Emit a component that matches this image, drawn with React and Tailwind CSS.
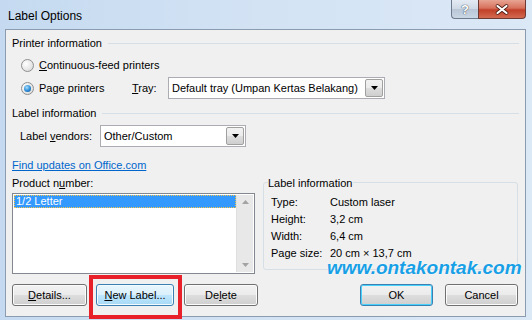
import React from "react";

const font = { fontFamily: '"Liberation Sans", Arial, sans-serif' };

const btnBase =
  "h-[22px] flex items-center justify-center rounded-[3px] border text-[11px] text-black whitespace-nowrap";
const btnNormal =
  "border-[#707070] bg-[linear-gradient(to_bottom,#f2f2f2_0%,#ebebeb_50%,#dddddd_51%,#cfcfcf_100%)] shadow-[inset_0_0_0_1px_#fcfcfc]";
const btnHover =
  "border-[#3c7fb1] bg-[linear-gradient(to_bottom,#eaf6fd_0%,#d9f0fc_50%,#bee6fd_51%,#a7d9f5_100%)] shadow-[inset_0_0_0_1px_#f4fbff]";
const btnFocus =
  "border-[#3c7fb1] bg-[linear-gradient(to_bottom,#f2f2f2_0%,#ebebeb_50%,#dddddd_51%,#cfcfcf_100%)] shadow-[inset_0_0_0_1px_#48d2fb]";

const Button = ({ children, variant = "normal", className = "" }) => {
  const v = variant === "hover" ? btnHover : variant === "focus" ? btnFocus : btnNormal;
  return <div className={`${btnBase} ${v} ${className}`}>{children}</div>;
};

const Radio = ({ checked }) => (
  <div className="w-[13px] h-[13px] shrink-0 rounded-full border border-[#8e8f8f] bg-[radial-gradient(circle_at_35%_35%,#ffffff_0%,#e6e6e6_60%,#d0d0d0_100%)] flex items-center justify-center">
    {checked && (
      <div className="w-[7px] h-[7px] rounded-full bg-[radial-gradient(circle_at_40%_35%,#a8e0ff_0%,#2a8ad4_55%,#0d4f8b_100%)]" />
    )}
  </div>
);

const DropArrow = () => (
  <div className="w-[18px] h-full shrink-0 border border-[#a0a0a0] rounded-[2px] bg-[linear-gradient(to_bottom,#f2f2f2_0%,#ebebeb_50%,#dddddd_51%,#cfcfcf_100%)] flex items-center justify-center">
    <svg width="7" height="4" viewBox="0 0 7 4">
      <path d="M0 0h7L3.5 4z" fill="#000" />
    </svg>
  </div>
);

const Select = ({ value, className }) => (
  <div className={`h-[22px] border border-[#abadb3] bg-white flex items-center pl-[3px] pr-px py-px ${className}`}>
    <span className="flex-1 text-[11px] text-black whitespace-nowrap overflow-hidden">{value}</span>
    <DropArrow />
  </div>
);

const Header = ({ children }) => (
  <div className="h-[16px] flex items-center pl-[6px]">
    <span className="text-[11px] text-black whitespace-nowrap pr-[6px]">{children}</span>
    <div className="flex-1 h-px bg-[#d5dfe5] mr-[6px]" />
  </div>
);

const InfoRow = ({ label, value }) => (
  <div className="flex h-[17px] items-center text-[11px] text-black whitespace-nowrap">
    <span className="w-[59px]">{label}</span>
    <span>{value}</span>
  </div>
);

export default function App() {
  return (
    <div
      className="relative w-[532px] h-[320px] overflow-hidden bg-[linear-gradient(to_right,#c5daf0_0%,#d3e3f4_50%,#dbe8f6_100%)] flex flex-col"
      style={font}
    >
      {/* title bar */}
      <div className="h-[29px] flex items-start justify-between shrink-0">
        <span className="mt-[7px] ml-[8px] text-[12px] text-black">Label Options</span>
        <div className="flex mr-[6px] shrink-0">
          <div className="w-[27px] h-[19px] shrink-0 border border-[#6d7b8d] border-r-0 border-t-0 rounded-bl-[4px] bg-[linear-gradient(to_bottom,#e4ebf3_0%,#cfd9e5_50%,#b8c6d6_51%,#c9d6e4_100%)] flex items-center justify-center">
            <span className="text-[13px] font-bold text-white leading-none [text-shadow:0_0_1px_#3d4a5a,0_0_1px_#3d4a5a]">?</span>
          </div>
          <div className="w-[48px] h-[19px] shrink-0 border border-[#6d3a33] border-t-0 rounded-br-[4px] bg-[linear-gradient(to_bottom,#e8a493_0%,#d7715c_45%,#c13f28_55%,#d26a50_100%)] flex items-center justify-center">
            <svg width="14" height="11" viewBox="0 0 14 11">
              <path d="M2.5 2l9 7M11.5 2l-9 7" stroke="#4a1a12" strokeWidth="3.6" strokeLinecap="round" />
              <path d="M2.5 2l9 7M11.5 2l-9 7" stroke="#fff" strokeWidth="2.2" strokeLinecap="round" />
            </svg>
          </div>
        </div>
      </div>

      {/* client area */}
      <div className="ml-[5px] mr-[6px] h-[288px] border border-[#8b9bb0] bg-[#f0f0f0] flex flex-col">
        <div className="mt-[5px]">
          <Header>Printer information</Header>
        </div>
        <div className="mt-[4px] h-[20px] flex items-center pl-[15px] gap-[5px] text-[11px] text-black whitespace-nowrap">
          <Radio />
          <span>
            <u>C</u>ontinuous-feed printers
          </span>
        </div>
        <div className="mt-[2px] h-[22px] flex items-center pl-[15px] text-[11px] text-black whitespace-nowrap">
          <Radio checked />
          <span className="ml-[5px] w-[93px]">
            Pa<u>g</u>e printers
          </span>
          <span className="w-[36px]">
            <u>T</u>ray:
          </span>
          <Select value="Default tray (Umpan Kertas Belakang)" className="w-[217px]" />
        </div>
        <div className="mt-[6px]">
          <Header>Label information</Header>
        </div>
        <div className="mt-[4px] h-[22px] flex items-center pl-[14px] text-[11px] text-black whitespace-nowrap">
          <span className="w-[80px]">
            Label <u>v</u>endors:
          </span>
          <Select value="Other/Custom" className="w-[146px]" />
        </div>
        <div className="mt-[10px] h-[16px] flex items-center pl-[6px]">
          <span className="text-[11px] text-[#0066cc] underline whitespace-nowrap">Find updates on Office.com</span>
        </div>

        <div className="mt-[2px] flex pl-[6px]">
          <div className="flex flex-col w-[243px]">
            <div className="h-[16px] flex items-center text-[11px] text-black whitespace-nowrap">
              Product n<u>u</u>mber:
            </div>
            <div className="mt-[2px] h-[81px] border border-[#828790] bg-white flex p-px">
              <div className="flex-1">
                <div className="h-[13px] bg-[#3399ff] outline-1 outline-dotted outline-[#f4c54a] -outline-offset-1 flex items-center pl-[2px] text-[11px] text-white">
                  1/2 Letter
                </div>
              </div>
              <div className="w-[17px] bg-[#e8e8e8] border-l border-[#e0e0e0] flex flex-col items-center justify-between py-[5px]">
                <svg width="7" height="4" viewBox="0 0 7 4">
                  <path d="M3.5 0L7 4H0z" fill="#a3a3a3" />
                </svg>
                <svg width="7" height="4" viewBox="0 0 7 4">
                  <path d="M0 0h7L3.5 4z" fill="#a3a3a3" />
                </svg>
              </div>
            </div>
          </div>

          <div className="ml-[8px] mt-[7px] w-[255px] h-[88px] border border-[#d5dfe5] rounded-[3px] flex flex-col pl-[7px]">
            <div className="-mt-[8px] h-[16px] flex items-center">
              <span className="bg-[#f0f0f0] pr-[1px] -ml-[3px] text-[11px] text-black whitespace-nowrap">Label information</span>
            </div>
            <div className="mt-[3px]">
              <InfoRow label="Type:" value="Custom laser" />
              <InfoRow label="Height:" value="3,2 cm" />
              <InfoRow label="Width:" value="6,4 cm" />
              <InfoRow label="Page size:" value="20 cm × 13,7 cm" />
            </div>
          </div>
        </div>

        <div className="mt-[10px] flex items-center pl-[6px] pr-[7px]">
          <Button className="w-[75px]">
            <span>
              <u>D</u>etails...
            </span>
          </Button>
          <Button variant="hover" className="w-[78px] ml-[9px]">
            <span>
              <u>N</u>ew Label...
            </span>
          </Button>
          <Button className="w-[74px] ml-[10px]">
            <span>
              De<u>l</u>ete
            </span>
          </Button>
          <div className="flex-1" />
          <Button variant="focus" className="w-[73px]">
            OK
          </Button>
          <Button className="w-[73px] ml-[12px]">Cancel</Button>
        </div>
      </div>

      {/* watermark overlay */}
      <div
        className="absolute left-[327px] top-[258px] text-[19px] font-bold italic text-[#18a0e6] leading-none whitespace-nowrap [text-shadow:0_0_2px_#ffffff]"
        style={{ fontFamily: '"Liberation Sans", Arial, sans-serif' }}
      >
        www.ontakontak.com
      </div>

      {/* red highlight annotation */}
      <div className="absolute left-[89px] top-[275px] w-[93px] h-[44px] border-[4px] border-[#e8202a]" />
    </div>
  );
}
